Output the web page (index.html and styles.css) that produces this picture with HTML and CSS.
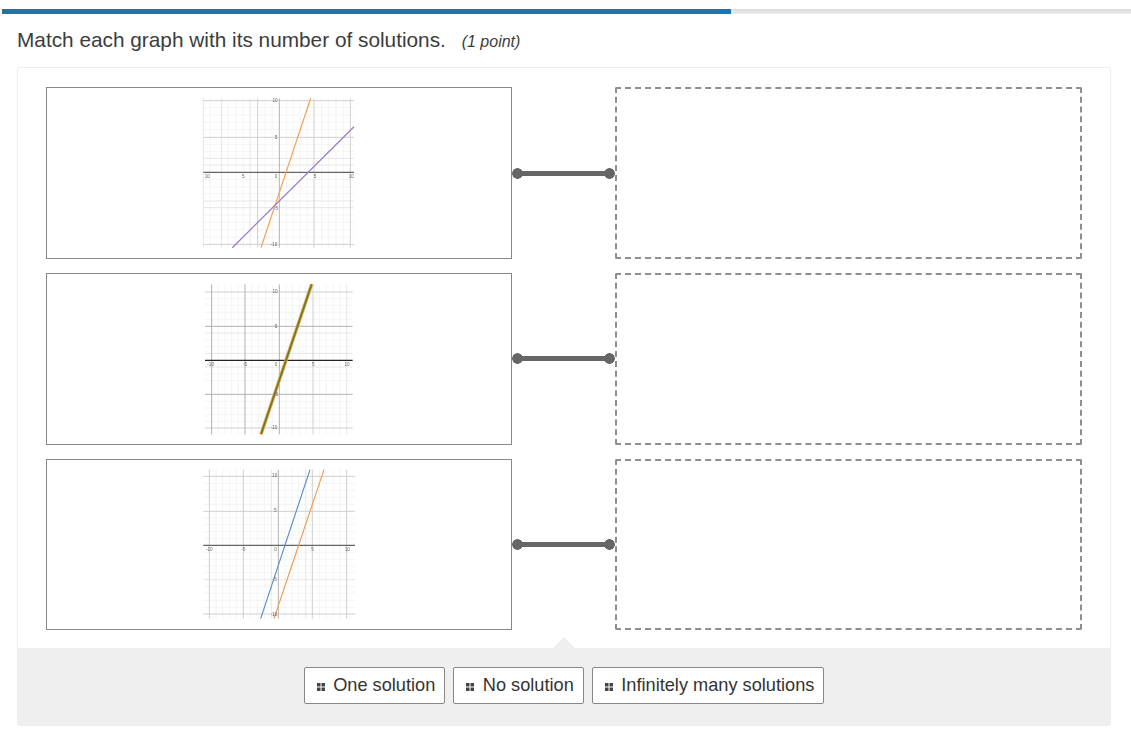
FILE: index.html
```html
<!DOCTYPE html>
<html lang="en">
<head>
    <meta charset="UTF-8">
    <meta name="viewport" content="width=device-width, initial-scale=1.0">
    <title>Match each graph</title>
    <link rel="stylesheet" href="styles.css">
</head>
<body>
    <div class="progress"><div class="progress-fill"></div></div>

    <h1 class="question">Match each graph with its number of solutions. <span class="points">(1 point)</span></h1>

    <div class="panel">
        <div class="pairs">
            <div class="graph-box">
                <svg class="graph" viewBox="-3 9 540 510" width="180" height="170">
                    <path class="minor" d="M60 40V488M115 40V488M138 40V488M160 40V488M225 40V488M247 40V488M290 40V488M310 40V488M331 40V488M352 40V488M395 40V488M415 40V488M438 40V488M460 40V488M40 68H492M40 90H492M40 112H492M40 134H492M40 178H492M40 200H492M40 284H492M40 306H492M40 326H492M40 390H492M40 412H492M40 434H492M40 456H492"/>
                    <path class="mid" d="M40 220H492M40 240H492M40 348H492M40 368H492M40 40V488M95 40V488M180 40V488"/>
                    <path class="major" d="M40 47H492M40 157H492M40 478H492M203 40V488M372 40V488M481 40V488"/>
                    <path class="yaxis" d="M268 40V488"/>
                    <path class="xaxis" d="M40 262H492"/>
                    <line class="plot-orange" x1="362" y1="40" x2="213" y2="488"/>
                    <line class="plot-purple" x1="492" y1="125" x2="127" y2="488"/>
                    <g class="tick">
                        <text x="255" y="52">10</text><text x="258" y="161">5</text>
                        <text x="52" y="279">10</text><text x="160" y="279">5</text>
                        <text x="258" y="279">0</text><text x="375" y="279">5</text>
                        <text x="484" y="279">10</text><text x="258" y="374">-5</text>
                        <text x="252" y="482">-10</text>
                    </g>
                </svg>
            </div>
            <div class="connector"></div>
            <div class="drop-box"></div>

            <div class="graph-box">
                <svg class="graph" viewBox="-3 6 540 510" width="180" height="170">
                    <path class="minor" d="M85 37V487M105 37V487M125 37V487M145 37V487M185 37V487M206 37V487M227 37V487M247 37V487M288 37V487M308 37V487M328 37V487M348 37V487M389 37V487M409 37V487M430 37V487M450 37V487M45 80H488M45 100H488M45 121H488M45 142H488M45 204H488M45 224H488M45 306H488M45 326H488M45 388H488M45 408H488M45 428H488M45 448H488"/>
                    <path class="mid" d="M45 183H488M45 244H488M45 285H488M470 37V487"/>
                    <path class="major" d="M45 60H488M45 468H488M369 37V487"/>
                    <path class="strong" d="M45 163H488M45 367H488M65 37V487M165 37V487M268 37V487"/>
                    <path class="xaxis-dark" d="M45 265H488"/>
                    <line class="plot-orange-wide" x1="365" y1="37" x2="213" y2="487"/>
                    <line class="plot-green" x1="365" y1="37" x2="213" y2="487"/>
                    <g class="tick">
                        <text x="255" y="64">10</text><text x="258" y="167">5</text>
                        <text x="62" y="283">-10</text><text x="165" y="283">-5</text>
                        <text x="258" y="283">0</text><text x="370" y="283">5</text>
                        <text x="471" y="283">10</text><text x="258" y="372">-5</text>
                        <text x="252" y="472">-10</text>
                    </g>
                </svg>
            </div>
            <div class="connector"></div>
            <div class="drop-box"></div>

            <div class="graph-box">
                <svg class="graph" viewBox="-3 6 540 510" width="180" height="170">
                    <path class="minor" d="M78 35V482M98 35V482M119 35V482M140 35V482M181 35V482M202 35V482M223 35V482M285 35V482M306 35V482M326 35V482M388 35V482M408 35V482M429 35V482M450 35V482M40 76H495M40 97H495M40 118H495M40 139H495M40 180H495M40 200H495M40 221H495M40 242H495M40 283H495M40 304H495M40 324H495M40 344H495M40 386H495M40 406H495M40 427H495M40 448H495"/>
                    <path class="mid" d="M244 35V482M347 35V482M40 365H495"/>
                    <path class="major" d="M40 55H495M40 160H495M40 468H495M58 35V482M160 35V482M367 35V482M470 35V482"/>
                    <path class="yaxis" d="M265 35V482"/>
                    <path class="xaxis" d="M40 262H495"/>
                    <line class="plot-blue" x1="360" y1="35" x2="212" y2="482"/>
                    <line class="plot-orange" x1="402" y1="35" x2="252" y2="482"/>
                    <g class="tick">
                        <text x="254" y="58">10</text><text x="256" y="163">5</text>
                        <text x="58" y="278">-10</text><text x="160" y="278">-5</text>
                        <text x="257" y="278">0</text><text x="368" y="278">5</text>
                        <text x="472" y="278">10</text><text x="254" y="370">-5</text>
                        <text x="252" y="474">-10</text>
                    </g>
                </svg>
            </div>
            <div class="connector"></div>
            <div class="drop-box"></div>
        </div>

        <div class="tray">
            <button class="chip"><svg class="grip" viewBox="0 0 8 8" width="8" height="8"><path d="M0 0h3.5v3.5H0zM4.5 0h3.5v3.5H4.5zM0 4.5h3.5v3.5H0zM4.5 4.5h3.5v3.5H4.5z"/></svg>One solution</button>
            <button class="chip"><svg class="grip" viewBox="0 0 8 8" width="8" height="8"><path d="M0 0h3.5v3.5H0zM4.5 0h3.5v3.5H4.5zM0 4.5h3.5v3.5H0zM4.5 4.5h3.5v3.5H4.5z"/></svg>No solution</button>
            <button class="chip"><svg class="grip" viewBox="0 0 8 8" width="8" height="8"><path d="M0 0h3.5v3.5H0zM4.5 0h3.5v3.5H4.5zM0 4.5h3.5v3.5H0zM4.5 4.5h3.5v3.5H4.5z"/></svg>Infinitely many solutions</button>
        </div>
    </div>
</body>
</html>
```

FILE: styles.css
```css
body {
    font-family: "Liberation Sans", Arial, sans-serif;
    background-color: #fff;
    color: #333;
    margin: 0;
}
.progress {
    margin: 9px 0 0 2px;
    height: 5px;
    background: linear-gradient(#dcdcdc, #eaeaea);
}
.progress-fill {
    width: 729px;
    height: 100%;
    background-color: #1a75b0;
}
.question {
    margin: 14px 0 15px 17px;
    font-size: 20.8px;
    font-weight: normal;
    line-height: 23px;
    height: 24px;
    color: #3c3c3c;
}
.points {
    margin-left: 10px;
    font-size: 16px;
    font-style: italic;
}
.panel {
    margin-left: 17px;
    width: 1092px;
    height: 657px;
    border: 1px solid #eee;
    border-radius: 2px;
    display: flex;
    flex-direction: column;
    justify-content: space-between;
}
.pairs {
    display: grid;
    grid-template-columns: 466px 103px 467px;
    grid-auto-rows: 171.65px;
    row-gap: 14.25px;
    padding: 19px 28px 0;
}
.graph-box {
    border: 1px solid #888;
    display: flex;
    align-items: center;
    justify-content: center;
}
.drop-box {
    border: 2px dashed #8e8e8e;
    border-radius: 2px;
}
.connector {
    position: relative;
}
/* line between the boxes, with a round end each side */
.connector::before {
    content: "";
    position: absolute;
    left: 5px;
    right: 5px;
    top: 83.5px;
    height: 5px;
    background-color: #666;
}
.connector::after {
    content: "";
    position: absolute;
    left: 0;
    right: 0;
    top: 80.5px;
    height: 11px;
    background:
        radial-gradient(circle at 5.5px 5.5px, #666 5px, transparent 5.6px),
        radial-gradient(circle at 97.5px 5.5px, #666 5px, transparent 5.6px);
}
.graph {
    display: block;
    filter: blur(0.35px);
}
.graph path, .graph line {
    fill: none;
}
.minor { stroke: #f4f4f4; stroke-width: 3; }
.mid { stroke: #e6e6e6; stroke-width: 3; }
.major { stroke: #cfcfcf; stroke-width: 3; }
.strong { stroke: #b0b0b0; stroke-width: 3; }
.yaxis { stroke: #b4b4b4; stroke-width: 3; }
.xaxis { stroke: #666; stroke-width: 3.5; }
.xaxis-dark { stroke: #222; stroke-width: 4; }
.plot-orange { stroke: #f59a4c; stroke-width: 3.5; }
.plot-purple { stroke: #9a80c8; stroke-width: 4; }
.plot-blue { stroke: #5b8fc9; stroke-width: 3.5; }
.plot-orange-wide { stroke: #ef9a3f; stroke-width: 10; }
.plot-green { stroke: #5f7f2c; stroke-width: 5; }
.tick text {
    font-size: 14px;
    fill: #666;
    text-anchor: middle;
}
.tray {
    position: relative;
    height: 77px;
    background-color: #efefef;
    display: flex;
    justify-content: center;
    align-items: flex-start;
    gap: 8px;
    padding: 19px 0 0;
    box-sizing: border-box;
}
.tray::before {
    content: "";
    position: absolute;
    left: 535px;
    top: -11px;
    border-left: 11px solid transparent;
    border-right: 11px solid transparent;
    border-bottom: 11px solid #efefef;
}
.chip {
    height: 37px;
    padding: 0 9px 0 12px;
    font-family: inherit;
    font-size: 18.2px;
    color: #333;
    background-color: #fff;
    border: 1px solid #888;
    border-radius: 2px;
    display: flex;
    align-items: center;
}
.grip {
    margin: 3px 8.5px 0 0;
    fill: #444;
}
```
